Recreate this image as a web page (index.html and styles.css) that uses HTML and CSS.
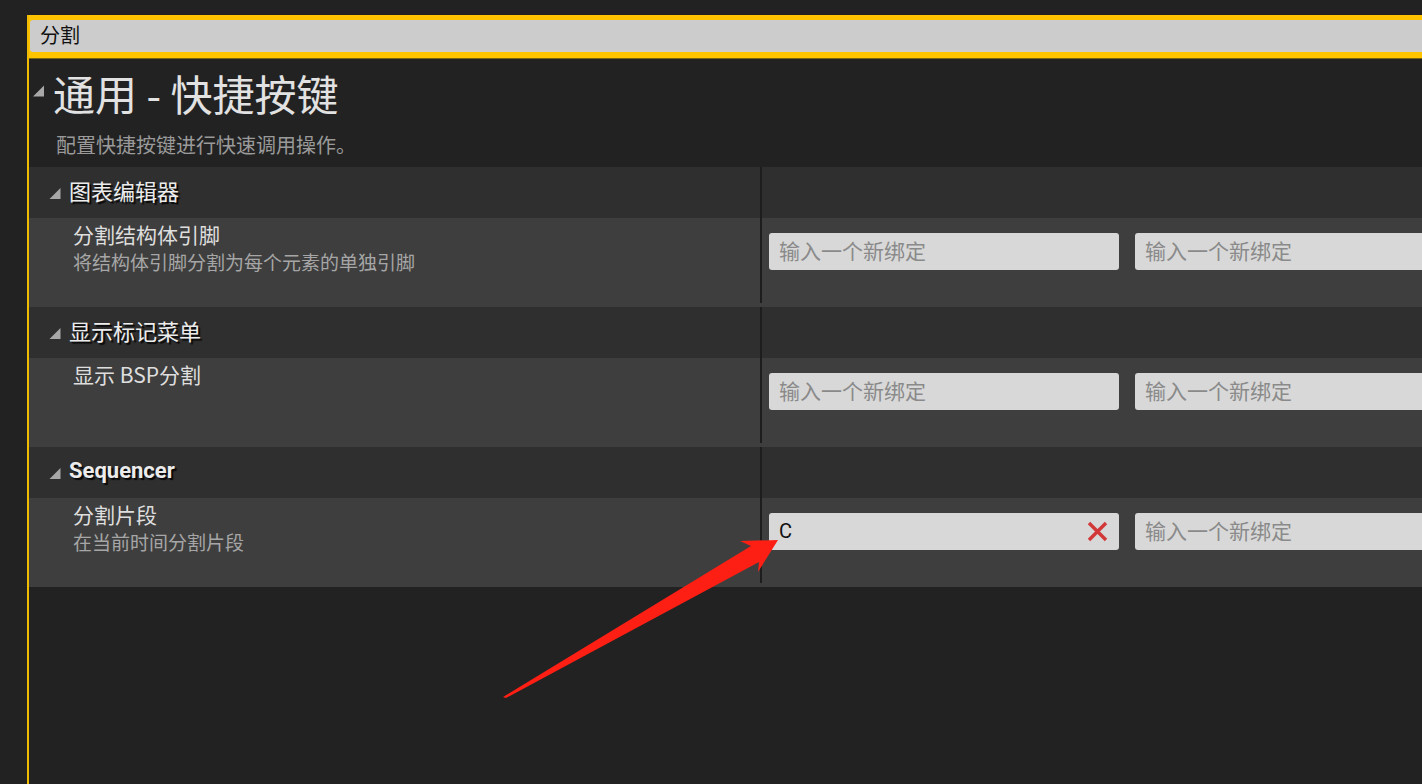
FILE: index.html
```html
<!DOCTYPE html>
<html lang="zh-CN">
<head>
<meta charset="utf-8">
<title>通用 - 快捷按键</title>
<link rel="stylesheet" href="styles.css">
</head>
<body>
<div class="panel">
  <div class="search">
    <div class="search-box"><span class="search-text">分割</span></div>
  </div>
  <div class="title-row">
    <svg class="tri tri-big" viewBox="0 0 10 10"><polygon points="10,0 10,10 0,10"/></svg>
    <h1 class="title">通用 - 快捷按键</h1>
  </div>
  <p class="desc">配置快捷按键进行快速调用操作。</p>

  <section class="group">
    <div class="group-header">
      <div class="left">
        <svg class="tri" viewBox="0 0 10 10"><polygon points="10,0 10,10 0,10"/></svg>
        <span class="group-name">图表编辑器</span>
      </div>
      <div class="divider"></div>
    </div>
    <div class="item">
      <div class="left">
        <div class="label">分割结构体引脚</div>
        <div class="sub">将结构体引脚分割为每个元素的单独引脚</div>
      </div>
      <div class="divider short"></div>
      <div class="right">
        <div class="binding"><span class="ph">输入一个新绑定</span></div>
        <div class="binding"><span class="ph">输入一个新绑定</span></div>
      </div>
    </div>
  </section>

  <section class="group">
    <div class="group-header">
      <div class="left">
        <svg class="tri" viewBox="0 0 10 10"><polygon points="10,0 10,10 0,10"/></svg>
        <span class="group-name">显示标记菜单</span>
      </div>
      <div class="divider"></div>
    </div>
    <div class="item">
      <div class="left">
        <div class="label">显示 BSP分割</div>
      </div>
      <div class="divider short"></div>
      <div class="right">
        <div class="binding"><span class="ph">输入一个新绑定</span></div>
        <div class="binding"><span class="ph">输入一个新绑定</span></div>
      </div>
    </div>
  </section>

  <section class="group">
    <div class="group-header">
      <div class="left">
        <svg class="tri" viewBox="0 0 10 10"><polygon points="10,0 10,10 0,10"/></svg>
        <span class="group-name latin">Sequencer</span>
      </div>
      <div class="divider"></div>
    </div>
    <div class="item">
      <div class="left">
        <div class="label">分割片段</div>
        <div class="sub">在当前时间分割片段</div>
      </div>
      <div class="divider short"></div>
      <div class="right">
        <div class="binding filled"><span class="key">C</span>
          <svg class="clear" viewBox="0 0 21 21"><path d="M2 2 L19 19 M19 2 L2 19"/></svg>
        </div>
        <div class="binding"><span class="ph">输入一个新绑定</span></div>
      </div>
    </div>
  </section>
</div>

<svg class="arrow" viewBox="0 0 1422 784" width="1422" height="784">
  <polygon points="503,697 751,546 740,541 778,540 758,572 759,562 506,698"/>
</svg>
</body>
</html>
```

FILE: styles.css
```css
html, body {
  margin: 0;
  padding: 0;
  background: #222222;
  overflow: hidden;
  width: 1422px;
  height: 784px;
}

body {
  position: relative;
  font-family: "Noto Sans CJK SC", "Roboto", sans-serif;
  color: #dcdcdc;
}

.panel {
  margin: 15px 0 0 27px;
  border-left: 2px solid #f0bb00;
  height: 769px;
  box-sizing: border-box;
}

.search {
  background: #ffc400;
  padding: 5px 0 6px 1px;
  border-bottom: 1px solid #7a6310;
}

.search-box {
  height: 32px;
  background: #cccccc;
  border-radius: 3px 0 0 3px;
  padding-left: 10px;
  display: flex;
  align-items: center;
}

.search-text {
  font-size: 20px;
  line-height: 26px;
  padding-bottom: 2px;
  color: #111;
}

.title-row {
  display: flex;
  align-items: center;
  padding-top: 9px;
  height: 50px;
}

.tri {
  width: 12px;
  height: 11px;
  fill: #a8a8a8;
  flex: none;
}

.tri-big {
  margin: 0 9px 0 4px;
  width: 11px;
  height: 12px;
  align-self: flex-start;
  margin-top: 17px;
}

.title {
  margin: 0;
  font-size: 42px;
  line-height: 50px;
  font-weight: normal;
  color: #e2e2e2;
  white-space: nowrap;
}

.desc {
  margin: 13px 0 8px 27px;
  font-size: 20px;
  line-height: 28px;
  color: #9a9a9a;
}

.group-header {
  display: flex;
  height: 51px;
  background: #2f2f2f;
}

.left {
  width: 731px;
  flex: none;
  box-sizing: border-box;
}

.group-header .left {
  display: flex;
  align-items: center;
  padding-left: 20px;
  padding-bottom: 5px;
}

.group-header .tri {
  margin-right: 8px;
  margin-top: 7px;
}

.group-name {
  font-size: 22px;
  color: #ececec;
  text-shadow: 2px 2px 1px rgba(0, 0, 0, 0.85);
  white-space: nowrap;
}

.group-name.latin {
  font-family: "Roboto", "Noto Sans CJK SC", sans-serif;
  font-weight: bold;
  font-size: 22px;
}

.divider {
  width: 2px;
  background: #1d1d1d;
  flex: none;
}

.divider.short {
  margin-bottom: 4px;
}

.item {
  display: flex;
  height: 89px;
  background: #3e3e3e;
}

.item .left {
  padding: 3px 0 0 44px;
}

.label {
  font-size: 21px;
  line-height: 26px;
  color: #dedede;
  white-space: nowrap;
}

.sub {
  margin-top: 2px;
  font-size: 19px;
  line-height: 26px;
  color: #a6a6a6;
  white-space: nowrap;
}

.right {
  display: flex;
  gap: 16px;
  padding: 15px 0 0 7px;
  flex: none;
}

.binding {
  width: 350px;
  height: 37px;
  box-sizing: border-box;
  background: #d8d8d8;
  border-radius: 3px;
  padding: 0 11px 0 10px;
  display: flex;
  align-items: center;
  justify-content: space-between;
  flex: none;
}

.ph {
  font-size: 21px;
  line-height: 28px;
  padding-bottom: 4px;
  color: #8a8a8a;
  white-space: nowrap;
}

.key {
  font-family: "Roboto", sans-serif;
  font-size: 20px;
  line-height: 26px;
  padding-bottom: 2px;
  color: #111;
}

.clear {
  width: 21px;
  height: 21px;
  stroke: #d23838;
  stroke-width: 3.4;
  fill: none;
}

.arrow {
  position: absolute;
  left: 0;
  top: 0;
  pointer-events: none;
}

.arrow polygon {
  fill: #fd1f14;
}
```
